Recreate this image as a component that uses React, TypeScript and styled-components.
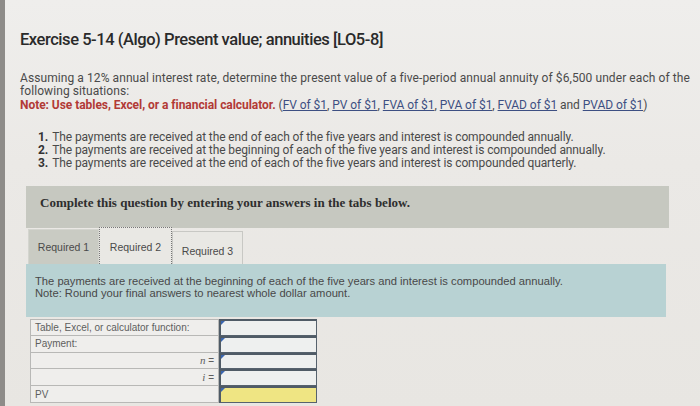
import React from "react";
import styled, { createGlobalStyle } from "styled-components";

const GlobalStyle = createGlobalStyle`
  html, body {
    margin: 0;
    padding: 0;
    background: #ebe9e6;
  }
  * {
    box-sizing: border-box;
  }
`;

const Page = styled.div`
  display: flex;
  width: 700px;
  height: 406px;
  overflow: hidden;
  background: linear-gradient(180deg, #efeeec 0%, #ebe9e6 40%, #e8e6e2 100%);
`;

const LeftEdge = styled.div`
  width: 5px;
  flex-shrink: 0;
  background: #8e8c89;
`;

const Main = styled.div`
  flex: 1;
  padding: 30px 10px 0 15px;
  font-family: Roboto, "Liberation Sans", sans-serif;
  color: #4a4a4a;
`;

const Title = styled.h1`
  margin: 0;
  font-size: 16.5px;
  line-height: 20px;
  font-weight: 500;
  letter-spacing: -0.45px;
  color: #2a2a2a;
`;

const Intro = styled.p`
  margin: 22px 0 0;
  font-size: 12px;
  line-height: 13px;
  letter-spacing: 0.08px;
`;

const NoteLine = styled.div`
  font-size: 12px;
  line-height: 14px;
  letter-spacing: -0.05px;
`;

const NoteLabel = styled.span`
  font-weight: 700;
  color: #b23a36;
`;

const RefLink = styled.a`
  color: #3d4f82;
  text-decoration: underline;
`;

const Steps = styled.div`
  margin: 19px 0 0 18px;
  font-size: 12px;
  line-height: 13px;
  letter-spacing: -0.1px;
`;

const Step = styled.div`
  display: flex;
  gap: 4px;
`;

const StepNum = styled.span`
  font-weight: 700;
  color: #333;
`;

const Instruction = styled.div`
  margin: 16px 0 0 6px;
  width: 643px;
  height: 42px;
  padding: 10px 14px;
  background: #c6c8c0;
  font-family: "Liberation Serif", serif;
  font-weight: 700;
  font-size: 13px;
  line-height: 14px;
  color: #2e2e2e;
`;

const TabRow = styled.div`
  display: flex;
  align-items: flex-end;
  margin-left: 8px;
  height: 36px;
`;

const Tab = styled.div<{ $variant: "done" | "active" | "idle" }>`
  display: flex;
  justify-content: center;
  padding-top: ${({ $variant }) => ($variant === "done" ? "11px" : "13px")};
  width: ${({ $variant }) => ($variant === "active" ? "73px" : "71px")};
  height: ${({ $variant }) =>
    $variant === "done" ? "35px" : $variant === "active" ? "37px" : "33px"};
  font-family: "Liberation Sans", Arial, sans-serif;
  font-size: 10.5px;
  color: #4a4a4a;
  background: ${({ $variant }) =>
    $variant === "done" ? "#c9cbc3" : "#e9e8e4"};
  border: ${({ $variant }) =>
    $variant === "active"
      ? "1px dotted #777"
      : $variant === "idle"
      ? "1px solid #c8c8c4"
      : "1px solid #d4d5cf"};
  border-bottom: none;
`;

const Prompt = styled.div`
  margin-left: 6px;
  width: 640px;
  height: 53px;
  padding: 12px 9px;
  background: #b8d2d3;
  font-family: "Liberation Sans", Arial, sans-serif;
  font-size: 11.2px;
  line-height: 11.5px;
  color: #484848;
`;

const Sheet = styled.div`
  display: grid;
  grid-template-columns: 189px 98px;
  grid-auto-rows: 16.8px;
  margin: 2px 0 0 10px;
  width: 287px;
`;

const Label = styled.div<{ $right?: boolean }>`
  display: flex;
  align-items: center;
  justify-content: ${({ $right }) => ($right ? "flex-end" : "flex-start")};
  padding: 0 4px;
  border: 1px solid #b8b8b6;
  border-top: none;
  background: #efeeec;
  font-family: "Liberation Sans", Arial, sans-serif;
  font-size: 10px;
  color: #5e5e5e;

  &:first-child {
    border-top: 1px solid #b8b8b6;
  }
`;

const Var = styled.i`
  font-family: "Liberation Serif", serif;
  font-size: 11px;
`;

const Input = styled.div<{ $total?: boolean }>`
  position: relative;
  border: 1px solid #56626d;
  border-top: 2px solid #4f5b66;
  border-left: 2px solid #4f5b66;
  background: ${({ $total }) => ($total ? "#efe583" : "#eef0ef")};

  &::before {
    content: "";
    position: absolute;
    top: 0;
    left: 0;
    border-top: 4px solid #3a66b0;
    border-right: 4px solid transparent;
  }
`;

const links = ["FV of $1", "PV of $1", "FVA of $1", "PVA of $1", "FVAD of $1"];

const steps = [
  "The payments are received at the end of each of the five years and interest is compounded annually.",
  "The payments are received at the beginning of each of the five years and interest is compounded annually.",
  "The payments are received at the end of each of the five years and interest is compounded quarterly.",
];

export default function App() {
  return (
    <>
      <GlobalStyle />
      <Page>
        <LeftEdge />
        <Main>
          <Title>Exercise 5-14 (Algo) Present value; annuities [LO5-8]</Title>

          <Intro>
            Assuming a 12% annual interest rate, determine the present value of a
            five-period annual annuity of $6,500 under each of the following
            situations:
          </Intro>
          <NoteLine>
            <NoteLabel>Note: Use tables, Excel, or a financial calculator.</NoteLabel>{" "}
            (
            {links.map((l, i) => (
              <React.Fragment key={l}>
                <RefLink>{l}</RefLink>
                {i < links.length - 1 ? ", " : " "}
              </React.Fragment>
            ))}
            and <RefLink>PVAD of $1</RefLink>)
          </NoteLine>

          <Steps>
            {steps.map((s, i) => (
              <Step key={i}>
                <StepNum>{i + 1}.</StepNum>
                <span>{s}</span>
              </Step>
            ))}
          </Steps>

          <Instruction>
            Complete this question by entering your answers in the tabs below.
          </Instruction>

          <TabRow>
            <Tab $variant="done">Required 1</Tab>
            <Tab $variant="active">Required 2</Tab>
            <Tab $variant="idle">Required 3</Tab>
          </TabRow>

          <Prompt>
            The payments are received at the beginning of each of the five years
            and interest is compounded annually.
            <br />
            Note: Round your final answers to nearest whole dollar amount.
          </Prompt>

          <Sheet>
            <Label>Table, Excel, or calculator function:</Label>
            <Input />
            <Label>Payment:</Label>
            <Input />
            <Label $right>
              <Var>n</Var>&nbsp;=
            </Label>
            <Input />
            <Label $right>
              <Var>i</Var>&nbsp;=
            </Label>
            <Input />
            <Label>PV</Label>
            <Input $total />
          </Sheet>
        </Main>
      </Page>
    </>
  );
}
